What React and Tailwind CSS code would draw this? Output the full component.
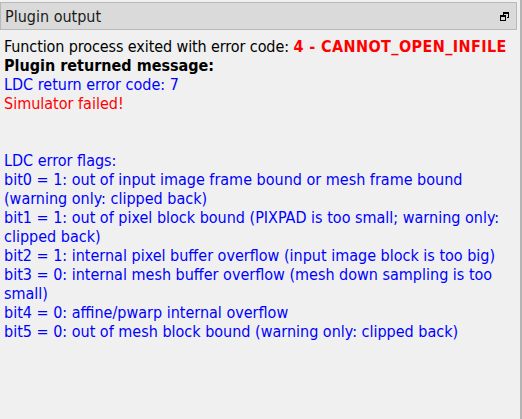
const FONT = { fontFamily: '"DejaVu Sans Condensed", "DejaVu Sans", sans-serif' };

const flagLines = [
  "LDC error flags:",
  "bit0 = 1: out of input image frame bound or mesh frame bound",
  "(warning only: clipped back)",
  "bit1 = 1: out of pixel block bound (PIXPAD is too small; warning only:",
  "clipped back)",
  "bit2 = 1: internal pixel buffer overflow (input image block is too big)",
  "bit3 = 0: internal mesh buffer overflow (mesh down sampling is too",
  "small)",
  "bit4 = 0: affine/pwarp internal overflow",
  "bit5 = 0: out of mesh block bound (warning only: clipped back)",
];

function RestoreIcon() {
  return (
    <svg width="9" height="9" viewBox="0 0 9 9" shapeRendering="crispEdges">
      {/* back window */}
      <path d="M3 0h6v6h-2v-1h1v-3h-4v1h-1z" fill="#000" />
      {/* front window */}
      <path d="M0 3h6v6h-6z M1 5v3h4v-3z" fill="#000" fillRule="evenodd" />
    </svg>
  );
}

export default function App() {
  return (
    <div className="w-[522px] h-[419px] bg-[#f0f0f0] flex text-[16px] leading-[19px]" style={FONT}>
      <div className="w-[520px] flex flex-col">

        {/* HEADER */}
        <div className="mt-[2px] w-[517px] h-[28px] flex items-center justify-between bg-[#dadada] border border-[#b9b9b9] pl-[4px] pr-[7px] text-[#1a1a1a]">
          <span>Plugin output</span>
          <RestoreIcon />
        </div>

        {/* OUTPUT */}
        <div className="pt-[7px] pl-[4px] whitespace-nowrap">
          <div className="text-black">
            <span className="tracking-[-0.1px]">Function process exited with error code:</span>{" "}
            <span className="font-bold text-[#ff0000] tracking-[0.4px]">4 - CANNOT_OPEN_INFILE</span>
          </div>
          <div className="font-bold text-black">Plugin returned message:</div>
          <div className="text-[#0000ff]">LDC return error code: 7</div>
          <div className="text-[#ff0000]">Simulator failed!</div>
          <div className="h-[38px]" />
          {flagLines.map((line, i) => (
            <div key={i} className="text-[#0000ff]">{line}</div>
          ))}
        </div>

      </div>
      <div className="w-[2px] h-full bg-[#b4b4b4]" />
    </div>
  );
}
